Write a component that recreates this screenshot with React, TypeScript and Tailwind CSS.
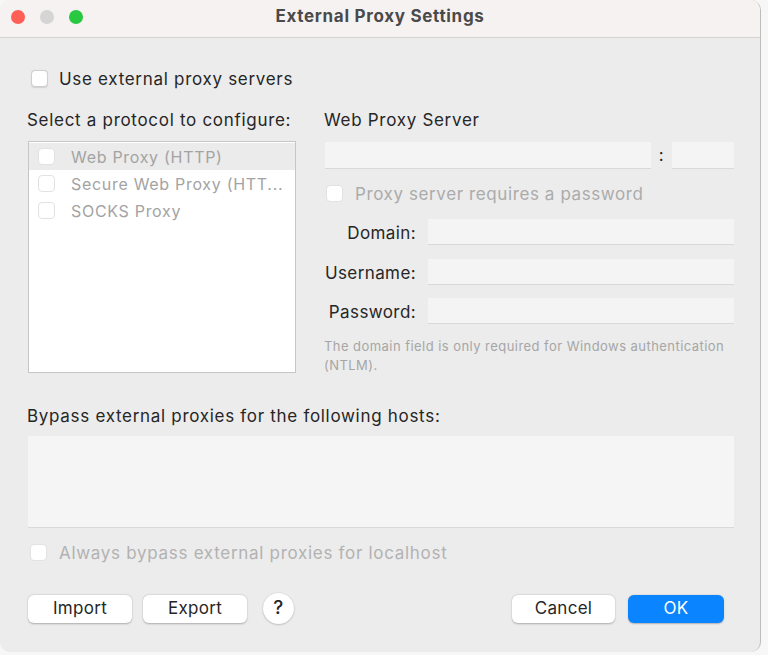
import React from "react";

const font = { fontFamily: "Inter, 'Noto Sans', sans-serif" };

function Box({ disabled = false }: { disabled?: boolean }) {
    return (
        <div
            className={
                "w-[17px] h-[17px] rounded-[4px] bg-white shrink-0 " +
                (disabled ? "border border-[#e2e2e2]" : "border border-[#cfcfcf] shadow-[0_0.5px_1px_rgba(0,0,0,0.12)]")
            }
        />
    );
}

function Field({ className = "" }: { className?: string }) {
    return <div className={"bg-[#f4f4f4] border-b border-[#d9d9d9] " + className} />;
}

function Button({ label, primary = false, width }: { label: string; primary?: boolean; width: string }) {
    return (
        <div
            className={
                "h-[28px] rounded-[6px] flex items-center justify-center text-[17px] " +
                width +
                (primary
                    ? " bg-[#0a84ff] text-white shadow-[0_0.5px_1.5px_rgba(0,0,0,0.25)]"
                    : " bg-white text-[#262626] shadow-[0_0.5px_2px_rgba(0,0,0,0.28)]")
            }
        >
            {label}
        </div>
    );
}

export default function App() {
    const protocols = ["Web Proxy (HTTP)", "Secure Web Proxy (HTT...", "SOCKS Proxy"];
    const fields = ["Domain:", "Username:", "Password:"];

    return (
        <div className="w-[768px] h-[655px] bg-[#f7f7f7] flex" style={font}>
            <div className="w-[761px] h-[652px] rounded-[10px] overflow-hidden flex flex-col bg-[#ececec] border-r border-[#bdbdbd]">
                {/* Title bar */}
                <div className="h-[38px] shrink-0 bg-[#f7f2f2] border-b border-[#d6d2d2] flex items-center relative">
                    <div className="flex items-center gap-[15px] pl-[11px] -mt-[4px]">
                        <div className="w-[14px] h-[14px] rounded-full bg-[#fe5f57]" />
                        <div className="w-[14px] h-[14px] rounded-full bg-[#d5d5d5]" />
                        <div className="w-[14px] h-[14px] rounded-full bg-[#28c840]" />
                    </div>
                    <div className="absolute inset-0 -top-[4px] flex items-center justify-center text-[17px] font-bold tracking-[0.7px] text-[#4a4a4a]">
                        External Proxy Settings
                    </div>
                </div>

                {/* Body */}
                <div className="flex flex-col pl-[28px] pr-[26px] text-[#262626] tracking-[0.7px]">
                    <div className="mt-[31px] h-[18px] flex items-center gap-[11px] pl-[3px] text-[17px] leading-[20px]">
                        <Box />
                        <span className="pt-[2px]">Use external proxy servers</span>
                    </div>

                    <div className="mt-[24px] flex gap-[28px]">
                        {/* Left column */}
                        <div className="w-[268px] flex flex-col">
                            <div className="h-[20px] flex items-center text-[17px] -ml-[1px]">Select a protocol to configure:</div>
                            <div className="mt-[10px] h-[232px] bg-white border border-[#c6c6c6] flex flex-col pt-px">
                                {protocols.map((p, i) => (
                                    <div
                                        key={p}
                                        className={
                                            "h-[27px] flex items-center gap-[16px] pl-[9px] text-[16px] text-[#a3a3a3] " +
                                            (i === 0 ? "bg-[#ebebeb]" : "")
                                        }
                                    >
                                        <Box disabled />
                                        <span className="whitespace-nowrap">{p}</span>
                                    </div>
                                ))}
                            </div>
                        </div>

                        {/* Right column */}
                        <div className="flex-1 flex flex-col">
                            <div className="h-[20px] flex items-center text-[17px]">Web Proxy Server</div>
                            <div className="mt-[11px] flex items-center">
                                <Field className="h-[27px] w-[326px] ml-px" />
                                <div className="w-[21px] text-center text-[17px] leading-none">:</div>
                                <Field className="h-[27px] flex-1" />
                            </div>
                            <div className="mt-[14px] h-[20px] flex items-center gap-[12px] pl-[2px] text-[17px] leading-[20px] tracking-[0.6px] text-[#ababab]">
                                <Box disabled />
                                <span className="pt-[2px]">Proxy server requires a password</span>
                            </div>
                            <div className="mt-[16px] flex flex-col gap-[13.5px]">
                                {fields.map((f) => (
                                    <div key={f} className="h-[26px] flex items-center gap-[12px]">
                                        <div className="w-[92px] text-right text-[17px] leading-[20px] tracking-[0.4px] pt-[2px]">{f}</div>
                                        <Field className="h-[26px] flex-1" />
                                    </div>
                                ))}
                            </div>
                            <div className="mt-[13px] text-[13px] leading-[19px] tracking-[0.45px] text-[#a6a6a6]">
                                The domain field is only required for Windows authentication (NTLM).
                            </div>
                        </div>
                    </div>

                    <div className="mt-[32px] h-[20px] flex items-center text-[17px] -ml-[1px]">
                        Bypass external proxies for the following hosts:
                    </div>
                    <Field className="mt-[9px] h-[92px] bg-[#f5f5f5]" />
                    <div className="mt-[15px] h-[18px] flex items-center gap-[12px] pl-[2px] text-[17px] leading-[20px] text-[#b2b2b2]">
                        <Box disabled />
                        <span className="pt-[1px]">Always bypass external proxies for localhost</span>
                    </div>

                    <div className="mt-[32px] flex items-center tracking-[0.3px]">
                        <div className="flex items-center gap-[11px]">
                            <Button label="Import" width="w-[104px]" />
                            <Button label="Export" width="w-[104px]" />
                        </div>
                        <div className="ml-[16px] w-[31px] h-[31px] rounded-full bg-white shadow-[0_0.5px_2px_rgba(0,0,0,0.3)] flex items-center justify-center text-[19px] font-medium text-[#262626]">
                            ?
                        </div>
                        <div className="ml-auto mr-[10px] flex items-center gap-[13px]">
                            <Button label="Cancel" width="w-[103px]" />
                            <Button label="OK" width="w-[96px]" primary />
                        </div>
                    </div>
                </div>
            </div>
        </div>
    );
}
